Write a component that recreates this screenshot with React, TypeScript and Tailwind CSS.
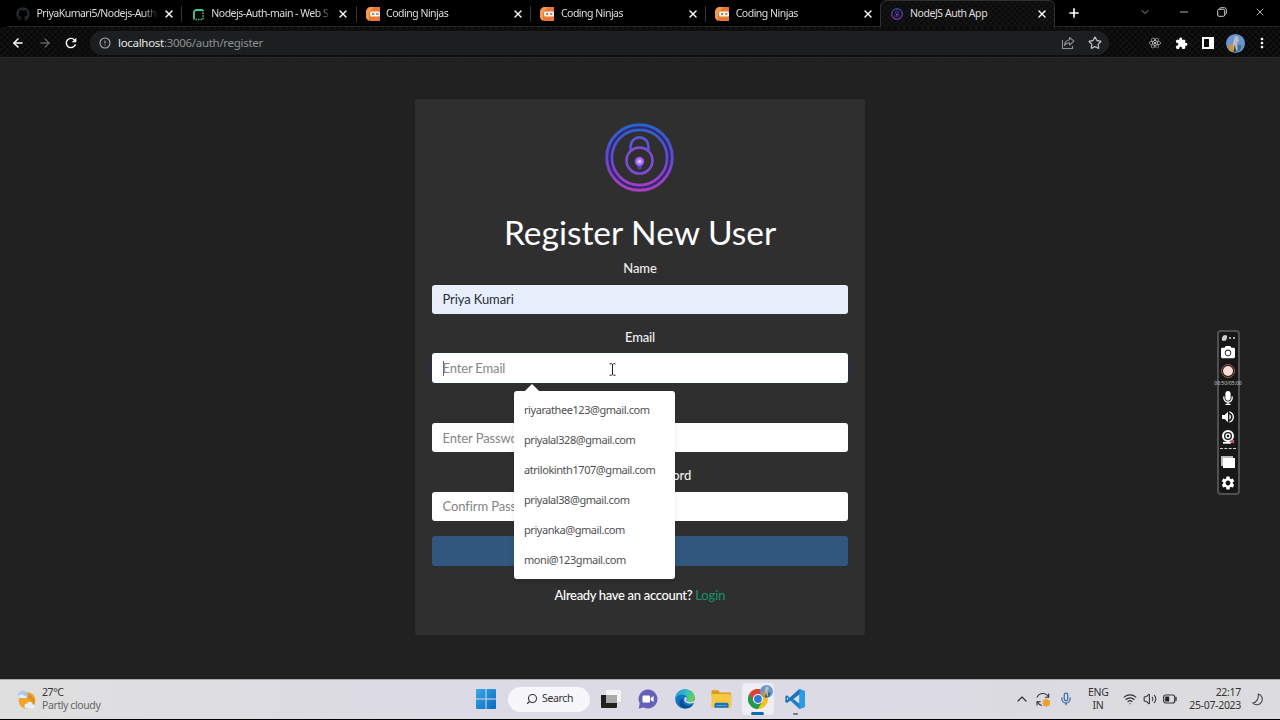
import React from 'react';
import {
  ArrowLeft,
  ArrowRight,
  ChevronDown,
  ChevronUp,
  Info,
  Mic,
  Minus,
  Plus,
  Search,
  Star,
  Volume2,
  Wifi,
  X,
} from 'lucide-react';
import { FaCamera, FaGithub, FaMicrophone, FaReact } from 'react-icons/fa';
import { MdExtension, MdMoreVert, MdRefresh, MdSettings, MdVolumeUp } from 'react-icons/md';

interface IconProps {
  className?: string;
}

const LockLogo = ({ className }: IconProps) => (
  <svg className={className} viewBox="0 0 68 68" fill="none">
    <defs>
      <linearGradient id="ring" x1="0" y1="0" x2="0" y2="68" gradientUnits="userSpaceOnUse">
        <stop offset="0" stopColor="#2367c9" />
        <stop offset="0.5" stopColor="#6548d2" />
        <stop offset="1" stopColor="#b43dbd" />
      </linearGradient>
      <radialGradient id="glow">
        <stop offset="0" stopColor="#eedcff" />
        <stop offset="0.5" stopColor="#b07cf5" />
        <stop offset="1" stopColor="#7c3fe0" />
      </radialGradient>
    </defs>
    <circle cx="34" cy="34" r="30" stroke="#31286c" strokeWidth="6" />
    <circle cx="34" cy="34" r="32.3" stroke="url(#ring)" strokeWidth="2.8" />
    <circle cx="34" cy="34" r="27.2" stroke="url(#ring)" strokeWidth="2.6" />
    <circle cx="34" cy="37" r="12.8" stroke="#7f4bd4" strokeWidth="2.6" />
    <path d="M25.2 27V23a8.8 8.8 0 0 1 17.6 0v4" stroke="#5a55d8" strokeWidth="2.6" />
    <path d="M31.500 39h5l-.8 6.500h-3.4z" fill="#6736c4" />
    <circle cx="34" cy="38" r="4.800" fill="url(#glow)" />
  </svg>
);

const NinjaIcon = ({ className }: IconProps) => (
  <svg className={className} viewBox="0 0 14 14">
    <path d="M5 0h9v14H5a5 5 0 0 1-5-5V5a5 5 0 0 1 5-5z" fill="#e97a35" />
    <path d="M0 5a5 5 0 0 1 5-5h3L3 6v8a5 5 0 0 1-3-5z" fill="#f29a50" />
    <rect x="4" y="4.5" width="10" height="5" rx="1.5" fill="#fff3e4" />
    <path d="M6 7h2.2M10.2 7h2.2" stroke="#2b2b2b" strokeWidth="1.1" />
  </svg>
);

const DottedIcon = ({ className }: IconProps) => (
  <svg className={className} viewBox="0 0 14 14" fill="none" stroke="#45c39a">
    <path d="M3 12V5.500A2.500 2.500 0 0 1 5.500 3H12" strokeWidth="1.8" />
    <path d="M12 3v9.500H2.500" strokeWidth="1.500" strokeDasharray="1.500 1.100" />
  </svg>
);

const ShareIcon = ({ className }: IconProps) => (
  <svg className={className} viewBox="0 0 14 14" fill="none" stroke="currentColor" strokeWidth="1.1" strokeLinejoin="round">
    <path d="M1.500 4v8.500h10V10" />
    <path d="M8.500 1.500L13 5.200 8.500 9V6.700C6 6.700 4.600 7.600 3.500 9.500 3.700 6.300 5.400 4.200 8.500 3.800z" />
  </svg>
);

const RestoreIcon = ({ className }: IconProps) => (
  <svg className={className} viewBox="0 0 10 10" fill="none" stroke="currentColor" strokeWidth="1">
    <rect x="0.7" y="2.3" width="7" height="7" rx="1.2" />
    <path d="M2.600 1.800Q2.800.7 4 .7h3.300a2 2 0 0 1 2 2V6q0 1.200-1 1.500" />
  </svg>
);

const WindowsIcon = ({ className }: IconProps) => (
  <svg className={className} viewBox="0 0 20 20">
    <defs>
      <linearGradient id="win" x1="0" y1="0" x2="1" y2="1">
        <stop offset="0" stopColor="#37a9e6" />
        <stop offset="1" stopColor="#0b68c2" />
      </linearGradient>
    </defs>
    <path d="M0 1q0-1 1-1h8.500v9.500H0zM10.500 0H19q1 0 1 1v8.500h-9.500zM0 10.500h9.500V20H1q-1 0-1-1zM10.500 10.500H20V19q0 1-1 1h-8.500z" fill="url(#win)" />
  </svg>
);

const TaskViewIcon = ({ className }: IconProps) => (
  <svg className={className} viewBox="0 0 20 20">
    <rect x="5" y="1" width="15" height="12" rx="1" fill="#f5f5f5" />
    <path d="M0 6h5v8h11v4q0 1-1 1H1q-1 0-1-1z" fill="#202020" />
    <path d="M5 6h11v8H5z" fill="#aaa" />
  </svg>
);

const ChatIcon = ({ className }: IconProps) => (
  <svg className={className} viewBox="0 0 20 20">
    <path d="M10 .5a9.500 9.500 0 1 1-4.300 18L.7 19.500l1-4.900A9.500 9.500 0 0 1 10 .5z" fill="#6560b8" />
    <rect x="4.500" y="6.500" width="7.500" height="7" rx="1.200" fill="#fff" />
    <path d="M12.600 9l3-2v6l-3-2z" fill="#fff" />
  </svg>
);

const EdgeIcon = ({ className }: IconProps) => (
  <svg className={className} viewBox="0 0 20 20">
    <defs>
      <linearGradient id="edgeTop" x1="0" y1="0" x2="1" y2="0.3">
        <stop offset="0" stopColor="#2398dd" />
        <stop offset="0.6" stopColor="#32bfc0" />
        <stop offset="1" stopColor="#63cf58" />
      </linearGradient>
    </defs>
    <circle cx="10" cy="10" r="9.800" fill="#1374c4" />
    <path d="M.2 10C.4 4 5 .2 10 .2c5.500 0 9.800 3.600 9.800 8.100 0 3.400-2.500 5-5.200 5-2 0-3.400-.8-3.400-1.700 0-.7 1-1 1-2.500C12.200 7 10 5.500 7.300 5.500 4 5.500 1.200 7.500.2 10z" fill="url(#edgeTop)" />
    <path d="M7.800 9.500c-1.200 4.200 2.600 7.800 6.800 7.400 2-.2 3.300-1 4-1.700C16 19.200 10 21 6 17.500 3 14.500 4.500 10.500 7.800 9.500z" fill="#0b4b90" />
    <path d="M9.300 9.500c-.7 4.500 5.200 6.500 10.500 4l.2-2.500c-3.200 2.700-7.200 2.500-8.700.8-.5-.7.500-1.500.8-2.700-.6-1.500-2.300-1-2.800.4z" fill="#dcd9e6" />
  </svg>
);

const FolderIcon = ({ className }: IconProps) => (
  <svg className={className} viewBox="0 0 20 18">
    <path d="M0 1.500Q0 .2 1.300.2h5.200L8.500 2.500H18q1.600 0 1.600 1.500v2H0z" fill="#dc9b18" />
    <path d="M0 4h18.500Q20 4 20 5.500v11q0 1.300-1.300 1.300H1.300Q0 17.800 0 16.500z" fill="#f7c843" />
    <path d="M3 17.800v-3.500q0-1.500 1.500-1.500h11q1.500 0 1.500 1.500v3.500z" fill="#1c73b3" />
    <path d="M5 15h10v1H5z" fill="#4aa6d8" />
  </svg>
);

const ChromeIcon = ({ className }: IconProps) => (
  <svg className={className} viewBox="0 0 20 20">
    <circle cx="10" cy="10" r="10" fill="#f4c21f" />
    <path d="M1.300 5A10 10 0 0 0 10 20l4.300-7.500L10 10z" fill="#239a4e" />
    <path d="M1.300 5A10 10 0 0 1 18.700 5H10l-4.300 7.500z" fill="#dc4334" />
    <circle cx="10" cy="10" r="5" fill="#fff" />
    <circle cx="10" cy="10" r="3.900" fill="#2f78dc" />
  </svg>
);

const VsCodeIcon = ({ className }: IconProps) => (
  <svg className={className} viewBox="0 0 20 20">
    <path d="M14.500 0L20 2.300v15.400L14.500 20 5 11.300 2 13.700.3 12.800V7.200L2 6.300l3 2.400z" fill="#1c7fc6" />
    <path d="M14.500 5.300v9.400L8.300 10zM2 8.300v3.400L3.700 10z" fill="#dcdae4" />
    <path d="M.3 12.800L14.500 0v5.300L2 13.700z" fill="#1c72b8" />
    <path d="M14.500 0L20 2.300v15.400L14.500 20z" fill="#2b9ce4" />
  </svg>
);

const WeatherIcon = ({ className }: IconProps) => (
  <svg className={className} viewBox="0 0 20 20">
    <circle cx="10.500" cy="11" r="8" fill="#eda52c" />
    <path d="M9 4.500a8 8 0 0 1 8 11c-1-4.500-4-7-8-7z" fill="#dc8e20" />
    <path d="M3.500 8.500a3 3 0 0 1 0-5.500 3.800 3.800 0 0 1 6.500 1.200 2.300 2.300 0 0 1 .3 4.300z" fill="#a9c8ec" />
    <path d="M2.500 7a3 3 0 0 1 2.500-2c1.500 0 2 .8 2.700 1.500 1 0 2 .2 2.500 2H3.500z" fill="#e6effa" />
    <path d="M10.500 18.500a2.400 2.400 0 0 1 0-4.800 3 3 0 0 1 5.500 1 2 2 0 0 1 1 3.800z" fill="#e6effa" />
  </svg>
);

const SyncIcon = ({ className }: IconProps) => (
  <svg className={className} viewBox="0 0 14 15" fill="none" stroke="#333" strokeWidth="1.100">
    <path d="M1 5.500A6.300 6.300 0 0 1 12.500 5M12.700 1.500V5.200H9M1 13.500V9.700h3.700M1.500 10a6 6 0 0 0 4.500 3.500" />
    <circle cx="10.300" cy="10.800" r="3.700" fill="#eda02c" stroke="none" />
  </svg>
);

const BatteryIcon = ({ className }: IconProps) => (
  <svg className={className} viewBox="0 0 14 10" fill="none">
    <rect x="0.700" y="1" width="11" height="8" rx="2" stroke="#333" strokeWidth="1.200" />
    <rect x="2.200" y="2.500" width="4" height="5" rx="0.500" fill="#222" />
    <path d="M13 3.500v3" stroke="#333" strokeWidth="1.300" strokeLinecap="round" />
  </svg>
);

const NightIcon = ({ className }: IconProps) => (
  <svg className={className} viewBox="0 0 12 13" fill="none" stroke="#444" strokeWidth="1.100" strokeLinejoin="round">
    <path d="M6.300 1a5.500 5.500 0 1 1-5.600 9C4.500 9.800 6.800 5.500 6.300 1z" />
  </svg>
);

const WebcamIcon = ({ className }: IconProps) => (
  <svg className={className} viewBox="0 0 14 14" fill="none">
    <circle cx="7" cy="6" r="5" stroke="#fff" strokeWidth="2" />
    <circle cx="7" cy="6" r="2" stroke="#fff" strokeWidth="1.400" />
    <path d="M2 12.800h8" stroke="#fff" strokeWidth="1.800" />
    <path d="M9.500 10l3.500 3M13 10l-3.500 3" stroke="#e8687a" strokeWidth="1.200" />
  </svg>
);

const Avatar = ({ className }: IconProps) => (
  <svg className={className} viewBox="0 0 20 20">
    <circle cx="10" cy="10" r="10" fill="#6d95cd" />
    <path d="M9 2.500q2.500-1 4 1l.5 4-2 1.500 1 8H6.500l1-8z" fill="#b9bcc5" />
    <path d="M3 12l4-2 1.500 8.500q-3 0-5-2z" fill="#dc9125" />
    <path d="M12.500 11l4 1-1.500 5-3 1.500z" fill="#30768b" />
    <path d="M9 11l2 8H8z" fill="#37415c" />
  </svg>
);

const tabs = [
  { title: 'PriyaKumari5/Nodejs-Authe', icon: <FaGithub className="h-3.5 w-3.5 text-[#25292c]" /> },
  { title: 'Nodejs-Auth-main - Web S', icon: <DottedIcon className="h-3.5 w-3.5" /> },
  { title: 'Coding Ninjas', icon: <NinjaIcon className="h-3.5 w-3.5" /> },
  { title: 'Coding Ninjas', icon: <NinjaIcon className="h-3.5 w-3.5" /> },
  { title: 'Coding Ninjas', icon: <NinjaIcon className="h-3.5 w-3.5" /> },
];

const suggestions = [
  'riyarathee123@gmail.com',
  'priyalal328@gmail.com',
  'atrilokinth1707@gmail.com',
  'priyalal38@gmail.com',
  'priyanka@gmail.com',
  'moni@123gmail.com',
];

const TabStrip = () => (
  <div className="flex h-[27px] bg-black pl-[7px] text-[10.5px] tracking-[-0.45px] text-[#dedede]">
    {tabs.map((tab, index) => (
      <div key={index} className="flex h-full w-[174.800px] shrink-0 items-center border-b border-[#262626] pt-px pl-[9px]">
        {tab.icon}
        <span className="ml-[6.500px] w-[121px] overflow-hidden tracking-[-0.5px] whitespace-nowrap [mask-image:linear-gradient(to_right,black_88%,transparent)]">
          {tab.title}
        </span>
        <X className="ml-[5px] h-3 w-3 shrink-0 text-white" strokeWidth={2.8} />
        <span className="ml-auto h-4 w-px bg-[#343434]" />
      </div>
    ))}
    <div className="-ml-px flex h-full w-[175px] shrink-0 items-center rounded-t-md border border-b-0 border-[#303030] bg-[repeating-conic-gradient(#131313_0_25%,#0c0c0c_0_50%)] bg-[length:6px_6px] pl-2.5">
      <LockLogo className="h-3 w-3" />
      <span className="ml-[7px] w-[121px]">NodeJS Auth App</span>
      <X className="ml-[5px] h-3 w-3 text-white" strokeWidth={2.8} />
    </div>
    <div className="flex flex-1 items-center border-b border-[#262626] pl-3">
      <Plus className="h-3.5 w-3.5 text-white" strokeWidth={2.800} />
      <div className="mb-0.5 ml-auto flex items-center pr-3.5 text-[#c8c8c8]">
        <ChevronDown className="mr-[27px] h-3 w-3 text-[#999]" strokeWidth={2} />
        <Minus className="mr-[27px] h-3 w-3" strokeWidth={1.800} />
        <RestoreIcon className="mr-[27px] h-2.5 w-2.5" />
        <X className="h-3 w-3" strokeWidth={1.800} />
      </div>
    </div>
  </div>
);

const Toolbar = () => (
  <div className="flex h-[31px] items-center border-b border-[#292a2a] bg-[repeating-conic-gradient(#111111_0_25%,#090909_0_50%)] bg-[length:6px_6px] pt-0.5 text-white">
    <ArrowLeft className="ml-[11px] h-3.5 w-3.5" strokeWidth={2.600} />
    <ArrowRight className="ml-[13px] h-3.5 w-3.5 text-[#606060]" strokeWidth={2.300} />
    <MdRefresh className="ml-[11px] h-4 w-4" />
    <div className="ml-[11px] flex h-6 w-[1019px] items-center rounded-full bg-[#1b1f20] pl-[9px]">
      <Info className="h-3 w-3 rotate-180 text-[#b0b0b0]" strokeWidth={2.200} />
      <span className="ml-[7px] text-[11.5px] tracking-[-0.3px] text-[#8b9092]">
        <span className="text-[#e8e8e8]">localhost</span>:3006/auth/register
      </span>
      <ShareIcon className="mr-[13px] ml-auto h-3.5 w-3.5 text-[#909090]" />
      <Star className="mr-[7px] h-3.5 w-3.5 text-[#bfbfbf]" strokeWidth={2.200} />
    </div>
    <div className="ml-10 flex items-center">
      <FaReact className="h-3 w-3 text-[#d8d8d8]" />
      <MdExtension className="ml-3.5 h-[13px] w-[13px]" />
      <span className="ml-3.5 flex h-[12px] w-3 border-2 border-white">
        <span className="ml-auto h-full w-[3px] bg-white" />
      </span>
      <Avatar className="ml-3 h-[19px] w-[19px]" />
      <MdMoreVert className="ml-[9px] h-4 w-4" />
    </div>
  </div>
);

const Field = ({ label, children }: { label: string; children: React.ReactNode }) => (
  <div className="mb-[13px]">
    <div className="flex h-[27px] items-center justify-center pb-[5px] text-[13px] font-medium tracking-[-0.15px] text-[#f0f0f0]">{label}</div>
    {children}
  </div>
);

const SuggestionMenu = () => (
  <div className="absolute top-[38px] left-[82px] z-10 h-[188px] w-[161px] rounded-[3px] bg-white pt-1 shadow-md">
    <span className="absolute -top-[5px] left-[13px] h-2.5 w-2.5 rotate-45 bg-white" />
    {suggestions.map((email) => (
      <div
        key={email}
        className="relative flex h-[30px] items-center pl-2.5 font-['Noto_Sans',sans-serif] text-[11px] tracking-[-0.44px] whitespace-nowrap text-[#505050]"
      >
        {email}
      </div>
    ))}
  </div>
);

const RegisterCard = () => (
  <div className="flex h-[536px] w-[450px] flex-col rounded-[3px] bg-[#2f2f2f] px-[17px] pt-6 font-[Lato,sans-serif] text-white">
    <LockLogo className="ml-[173px] h-[69px] w-[69px]" />
    <h1 className="mt-[18px] flex h-12 items-center justify-center pb-0.5 text-[33.500px] leading-none">Register New User</h1>
    <div className="flex flex-col">
      <Field label="Name">
        <div className="flex h-[29px] items-center rounded-[3px] bg-[#e7effd] px-[10.500px] pt-px text-[13px] tracking-[-0.1px] text-[#292e39]">
          Priya Kumari
        </div>
      </Field>
      <Field label="Email">
        <div className="relative -mt-px">
          <div className="flex h-[30px] items-center rounded-[3px] bg-white px-[10.500px] pt-px text-[13px] tracking-[-0.15px] text-[#858585] shadow-[0_0_2px_1px_#26364a]">
            <span className="-mr-px h-[15px] w-px bg-[#666]" />
            Enter Email
          </div>
          <svg className="absolute top-[10px] left-[177px] h-[13px] w-[7px]" viewBox="0 0 7 13" fill="none" stroke="#222">
            <path d="M.5.8h2l1 .7 1-.7h2M3.500 1.500v10M.5 12.200h2l1-.7 1 .7h2" />
          </svg>
          <SuggestionMenu />
        </div>
      </Field>
      <Field label="Password">
        <div className="flex h-[29px] items-center rounded-[3px] bg-white px-[10.500px] pt-0.5 text-[13px] tracking-[-0.1px] text-[#858585]">
          Enter Password
        </div>
      </Field>
      <Field label="Confirm Password">
        <div className="flex h-[29px] items-center rounded-[3px] bg-white px-[10.500px] pt-px text-[13px] tracking-[-0.1px] text-[#858585]">
          Confirm Password
        </div>
      </Field>
      <button className="mt-0.5 h-[30px] rounded-[3px] bg-[#31577f] text-[13px]">Register</button>
    </div>
    <p className="mt-5 text-center text-[13px] font-medium tracking-[-0.32px]">
      Already have an account? <span className="font-normal tracking-[-0.1px] text-[#16936b]">Login</span>
    </p>
  </div>
);

const RecorderBar = () => (
  <div className="absolute top-[330px] left-[1217px] flex h-[165px] w-[23px] flex-col items-center rounded-[4px] border-2 border-[#505050] bg-[#171717] pr-px text-white">
    <div className="mt-0.5 flex h-2 items-center gap-0.5">
      <span className="h-1.5 w-[5px] -skew-x-12 rounded-sm bg-[#ccc]" />
      <span className="w-1.5 border-t-2 border-dotted border-[#aaa]" />
    </div>
    <FaCamera className="mt-[3px] h-3.5 w-3.5 shrink-0" />
    <span className="mt-[5px] flex h-3.5 w-3.5 shrink-0 items-center justify-center rounded-full border border-[#a95b53]">
      <span className="h-2.5 w-2.5 rounded-full bg-[#fbdcd4]" />
    </span>
    <span className="mt-[3px] text-[5px] leading-[5px] whitespace-nowrap text-[#ccc]">00:50/05:00</span>
    <FaMicrophone className="mt-[5px] h-3.5 w-3.5 shrink-0" />
    <MdVolumeUp className="mt-1 h-4 w-4 shrink-0" />
    <WebcamIcon className="mt-[5px] h-3.5 w-3.5 shrink-0" />
    <span className="mt-1 w-4 border-t border-dashed border-[#ccc]" />
    <span className="relative mt-[7px] mr-0.5 h-2.5 w-3 shrink-0 bg-[#bbb]">
      <span className="absolute top-0.5 left-0.5 h-2.5 w-3 bg-white" />
    </span>
    <MdSettings className="mt-[9px] h-4 w-4 shrink-0" />
  </div>
);

const Taskbar = () => (
  <div className="flex h-[41px] items-center border-t border-b border-t-[#aaa] border-b-black bg-[linear-gradient(90deg,#dfdfdf,#dcdae4_35%,#dcdae4_65%,#dcdbdd)] pb-px text-[#333]">
    <div className="flex w-[476px] items-center pl-4">
      <WeatherIcon className="h-[21px] w-[21px]" />
      <div className="ml-[5px] text-[10.5px] leading-[13px] tracking-[-0.4px]">
        <div>27°C</div>
        <div className="text-[#666]">Partly cloudy</div>
      </div>
    </div>
    <div className="flex items-center">
      <WindowsIcon className="h-5 w-5" />
      <div className="ml-3 flex h-[25px] w-[82px] items-center rounded-full bg-[#f7f6fa] pl-[18px] text-[10.5px] tracking-[-0.35px]">
        <Search className="mr-1 h-3 w-3 -scale-x-100" strokeWidth={2.200} />
        Search
      </div>
      <TaskViewIcon className="ml-[11px] h-5 w-5" />
      <ChatIcon className="ml-[17px] h-5 w-5" />
      <EdgeIcon className="ml-[17px] h-5 w-5" />
      <FolderIcon className="ml-4 h-[18px] w-[21px]" />
      <div className="relative ml-2.5 flex h-8 w-8 items-center justify-center rounded-sm bg-[#eeedf3]">
        <ChromeIcon className="h-5 w-5" />
        <Avatar className="absolute top-0.5 right-px h-[13px] w-[13px]" />
        <span className="absolute bottom-0 left-[9px] h-[3px] w-[13px] rounded-full bg-[#176aa9]" />
      </div>
      <div className="relative ml-[11px] flex h-8 w-5 items-center">
        <VsCodeIcon className="h-5 w-5" />
        <span className="absolute bottom-0 left-2 h-0.5 w-[5px] rounded-full bg-[#777]" />
      </div>
    </div>
    <div className="ml-auto flex items-center text-[10.5px] leading-[13px] tracking-[-0.3px]">
      <ChevronUp className="h-4 w-4" strokeWidth={1.800} />
      <SyncIcon className="ml-[6px] h-[15px] w-3.5" />
      <Mic className="ml-[9px] h-3.5 w-3.5 text-[#3c71a7]" strokeWidth={2.200} />
      <div className="ml-[15px] w-5 pb-px text-center">
        <div>ENG</div>
        <div>IN</div>
      </div>
      <Wifi className="ml-[15px] h-3.5 w-3.5" strokeWidth={2} />
      <Volume2 className="ml-1.5 h-3.5 w-3.5" strokeWidth={1.800} />
      <BatteryIcon className="ml-1.5 h-2.5 w-3.5" />
      <div className="ml-2.5 w-[54px] pb-px text-right whitespace-nowrap">
        <div>22:17</div>
        <div>25-07-2023</div>
      </div>
      <NightIcon className="mr-4 ml-[11px] h-[13px] w-3" />
    </div>
  </div>
);

export default function App() {
  return (
    <div className="relative flex h-[720px] w-[1280px] flex-col overflow-hidden bg-[#212121] font-['Noto_Sans',sans-serif]">
      <TabStrip />
      <Toolbar />
      <main className="flex flex-1 justify-center pt-[41px]">
        <RegisterCard />
      </main>
      <RecorderBar />
      <Taskbar />
    </div>
  );
}
